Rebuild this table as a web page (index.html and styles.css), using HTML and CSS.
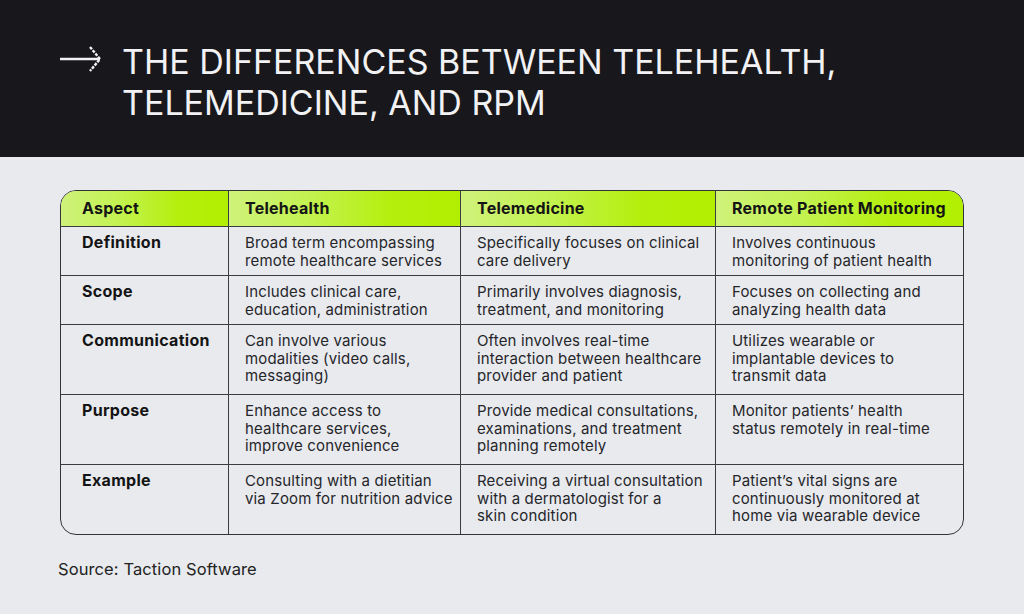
FILE: index.html
```html
<!DOCTYPE html>
<html lang="en">
<head>
<meta charset="utf-8">
<title>The differences between telehealth, telemedicine, and RPM</title>
<link rel="stylesheet" href="styles.css">
</head>
<body>
<header class="hero">
  <svg class="arrow" width="44" height="28" viewBox="0 0 44 28" aria-hidden="true">
    <line x1="0" y1="14" x2="40" y2="14" stroke="#f2f2f4" stroke-width="2.4"/>
    <polyline points="30,2 40,14 30,26" fill="none" stroke="#f2f2f4" stroke-width="2.4" stroke-dasharray="3 1.2"/>
  </svg>
  <h1 class="title">THE DIFFERENCES BETWEEN TELEHEALTH,<br>TELEMEDICINE, AND RPM</h1>
</header>
<main class="content">
  <div class="table">
    <div class="cell head first">Aspect</div>
    <div class="cell head">Telehealth</div>
    <div class="cell head">Telemedicine</div>
    <div class="cell head last">Remote Patient Monitoring</div>

    <div class="cell key">Definition</div>
    <div class="cell">Broad term encompassing<br>remote healthcare services</div>
    <div class="cell">Specifically focuses on clinical<br>care delivery</div>
    <div class="cell last">Involves continuous<br>monitoring of patient health</div>

    <div class="cell key">Scope</div>
    <div class="cell">Includes clinical care,<br>education, administration</div>
    <div class="cell">Primarily involves diagnosis,<br>treatment, and monitoring</div>
    <div class="cell last">Focuses on collecting and<br>analyzing health data</div>

    <div class="cell key">Communication</div>
    <div class="cell">Can involve various<br>modalities (video calls,<br>messaging)</div>
    <div class="cell">Often involves real-time<br>interaction between healthcare<br>provider and patient</div>
    <div class="cell last">Utilizes wearable or<br>implantable devices to<br>transmit data</div>

    <div class="cell key">Purpose</div>
    <div class="cell">Enhance access to<br>healthcare services,<br>improve convenience</div>
    <div class="cell">Provide medical consultations,<br>examinations, and treatment<br>planning remotely</div>
    <div class="cell last">Monitor patients’ health<br>status remotely in real-time</div>

    <div class="cell key bottom">Example</div>
    <div class="cell bottom">Consulting with a dietitian<br>via Zoom for nutrition advice</div>
    <div class="cell bottom">Receiving a virtual consultation<br>with a dermatologist for a<br>skin condition</div>
    <div class="cell bottom last">Patient’s vital signs are<br>continuously monitored at<br>home via wearable device</div>
  </div>
  <p class="source">Source: Taction Software</p>
</main>
</body>
</html>
```

FILE: styles.css
```css
* { box-sizing: border-box; }
html, body { margin: 0; padding: 0; }
body {
  width: 1024px;
  height: 614px;
  overflow: hidden;
  background: #e8eaee;
  font-family: "Inter", "Noto Sans", sans-serif;
  color: #1c1c1e;
}
.hero {
  height: 157px;
  background: #18181c;
  display: flex;
  align-items: flex-start;
  padding: 45px 0 0 60px;
  gap: 18px;
}
.arrow { flex: none; }
.title {
  margin: -4px 0 0 0;
  font-weight: 400;
  font-size: 34px;
  line-height: 41px;
  letter-spacing: 0;
  color: #f2f2f4;
}
.content {
  padding: 33px 60px 0 60px;
}
.table {
  display: grid;
  grid-template-columns: 168px 232px 255px 249px;
  grid-template-rows: 36px 49px 49px 70px 70px 69px;
  border: 1.5px solid #333338;
  border-radius: 16px;
  overflow: hidden;
}
.cell {
  border-right: 1px solid #3b3b40;
  border-bottom: 1px solid #3b3b40;
  padding: 7px 2px 0 16px;
  font-size: 15px;
  letter-spacing: 0.15px;
  line-height: 17.5px;
  color: #26262a;
  white-space: nowrap;
  overflow: hidden;
}
.cell.last { border-right: none; }
.cell.bottom { border-bottom: none; }
.head {
  background: linear-gradient(90deg, #cff27a 0%, #c3f250 35%, #b4ef0e 70%, #b2ef00 100%);
  font-weight: 700;
  font-size: 16px;
  letter-spacing: 0.25px;
  color: #141414;
  display: flex;
  align-items: center;
  padding-top: 1px;
}
.head.first, .key { padding-left: 21px; }
.key {
  font-weight: 700;
  font-size: 16px;
  letter-spacing: 0.3px;
  color: #141414;
}
.source {
  margin: 24px 0 0 -2px;
  font-size: 16.5px;
  letter-spacing: 0.1px;
  color: #222;
}
```
